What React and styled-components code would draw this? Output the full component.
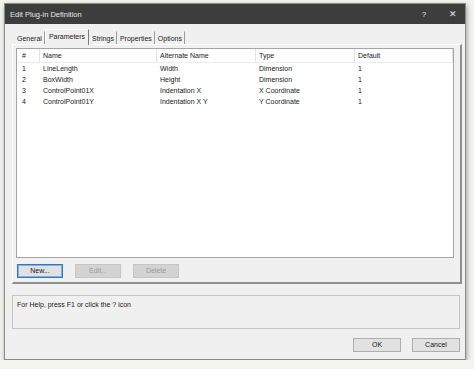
import styled, { createGlobalStyle } from 'styled-components'

const Global = createGlobalStyle`
  body {
    margin: 0;
    background: #f3f3ef;
    font-family: "Liberation Sans", Arial, sans-serif;
  }
`

const Window = styled.div`
  margin: 3px 0 0 4px;
  width: 462px;
  height: 357px;
  background: #f0f0f0;
  border: 1px solid #8a8a8a;
  box-sizing: border-box;
  box-shadow: 1px 2px 5px rgba(0, 0, 0, 0.35);
  display: flex;
  flex-direction: column;
`

const TitleBar = styled.div`
  height: 20px;
  background: #3d3d3d;
  color: #e6e6e6;
  font-size: 7.5px;
  display: flex;
  align-items: center;
  padding-left: 5px;
`

const Title = styled.span`
  flex: 1;
`

const TitleButton = styled.span`
  width: ${p => p.big ? '24px' : '34px'};
  text-align: center;
  font-size: ${p => p.big ? '9px' : '8px'};
`

const Body = styled.div`
  flex: 1;
  padding: 4px 3px 0 7px;
  display: flex;
  flex-direction: column;
`

const TabStrip = styled.div`
  display: flex;
  height: 16px;
  align-items: flex-end;
  padding-left: 2px;
`

const Tab = styled.div`
  font-size: 7px;
  color: #222;
  padding: 0 ${p => p.active ? '3px' : '2px'};
  height: ${p => p.active ? '16px' : '13px'};
  line-height: ${p => p.active ? '14px' : '13px'};
  border-right: 1px solid ${p => p.active ? '#7a7a7a' : '#9a9a9a'};
  border-left: 1px solid ${p => p.active ? '#ffffff' : 'transparent'};
  border-top: 1px solid ${p => p.active ? '#ffffff' : 'transparent'};
  background: #f0f0f0;
  box-sizing: border-box;
  margin-bottom: ${p => p.active ? '-1px' : '0'};
  position: relative;
`

const Panel = styled.div`
  height: 240px;
  box-sizing: border-box;
  border-top: 1px solid #ffffff;
  border-left: 1px solid #ffffff;
  border-right: 2px solid #8f8f8f;
  border-bottom: 2px solid #8f8f8f;
  padding: 3px 6px 0 3px;
  display: flex;
  flex-direction: column;
`

const List = styled.div`
  height: 210px;
  background: #fff;
  border: 1px solid #a5a5a5;
  box-sizing: border-box;
  font-size: 7px;
  color: #1a1a1a;
`

const Header = styled.div`
  display: grid;
  grid-template-columns: 23px 117px 99px 99px 98px;
  height: 13px;
  margin-bottom: 1px;
`

const HeadCell = styled.div`
  line-height: 13px;
  padding-left: ${p => p.first ? '5px' : '3px'};
  border-right: 1px solid #e3e3e3;
  border-bottom: 1px solid #ececec;
`

const Row = styled.div`
  display: grid;
  grid-template-columns: 23px 117px 99px 99px 98px;
  height: 11px;
  line-height: 11px;
`

const Cell = styled.div`
  padding-left: ${p => p.first ? '5px' : '3px'};
  white-space: nowrap;
`

const ButtonRow = styled.div`
  display: flex;
  gap: 12px;
  margin: 6px 0 0 1px;
`

const Button = styled.div`
  width: ${p => p.w || 46}px;
  height: 14px;
  box-sizing: border-box;
  font-size: 7px;
  text-align: center;
  line-height: 12px;
  color: ${p => p.disabled ? '#9b9b9b' : '#1a1a1a'};
  background: ${p => p.disabled ? '#d3d3d3' : '#e1e1e1'};
  border: 1px solid ${p => p.primary ? '#2f78c8' : p.disabled ? '#c6c6c6' : '#adadad'};
  box-shadow: ${p => p.primary ? 'inset 0 0 0 1px #7fb1e6' : 'none'};
`

const Status = styled.div`
  margin-top: 11px;
  height: 34px;
  box-sizing: border-box;
  border: 1px solid #c3c3c3;
  font-size: 7px;
  color: #1a1a1a;
  padding: 5px 0 0 4px;
  margin-right: 2px;
`

const Footer = styled.div`
  display: flex;
  justify-content: flex-end;
  gap: 11px;
  margin: 9px 2px 0 0;
`

const cols = ['#', 'Name', 'Alternate Name', 'Type', 'Default']

const rows = [
  ['1', 'LineLength', 'Width', 'Dimension', '1'],
  ['2', 'BoxWidth', 'Height', 'Dimension', '1'],
  ['3', 'ControlPoint01X', 'Indentation X', 'X Coordinate', '1'],
  ['4', 'ControlPoint01Y', 'Indentation X Y', 'Y Coordinate', '1'],
]

const tabs = ['General', 'Parameters', 'Strings', 'Properties', 'Options']

const App = () => (
  <>
    <Global />
    <Window>
      <TitleBar>
        <Title>Edit Plug-in Definition</Title>
        <TitleButton>?</TitleButton>
        <TitleButton big>✕</TitleButton>
      </TitleBar>
      <Body>
        <TabStrip>
          {tabs.map(t => (
            <Tab key={t} active={t === 'Parameters'}>{t}</Tab>
          ))}
        </TabStrip>
        <Panel>
          <List>
            <Header>
              {cols.map((c, i) => <HeadCell key={c} first={i === 0}>{c}</HeadCell>)}
            </Header>
            {rows.map(r => (
              <Row key={r[0]}>
                {r.map((v, i) => <Cell key={i} first={i === 0}>{v}</Cell>)}
              </Row>
            ))}
          </List>
          <ButtonRow>
            <Button primary>New...</Button>
            <Button disabled>Edit...</Button>
            <Button disabled>Delete</Button>
          </ButtonRow>
        </Panel>
        <Status>For Help, press F1 or click the ? icon</Status>
        <Footer>
          <Button w={48}>OK</Button>
          <Button w={48}>Cancel</Button>
        </Footer>
      </Body>
    </Window>
  </>
)

export default App
